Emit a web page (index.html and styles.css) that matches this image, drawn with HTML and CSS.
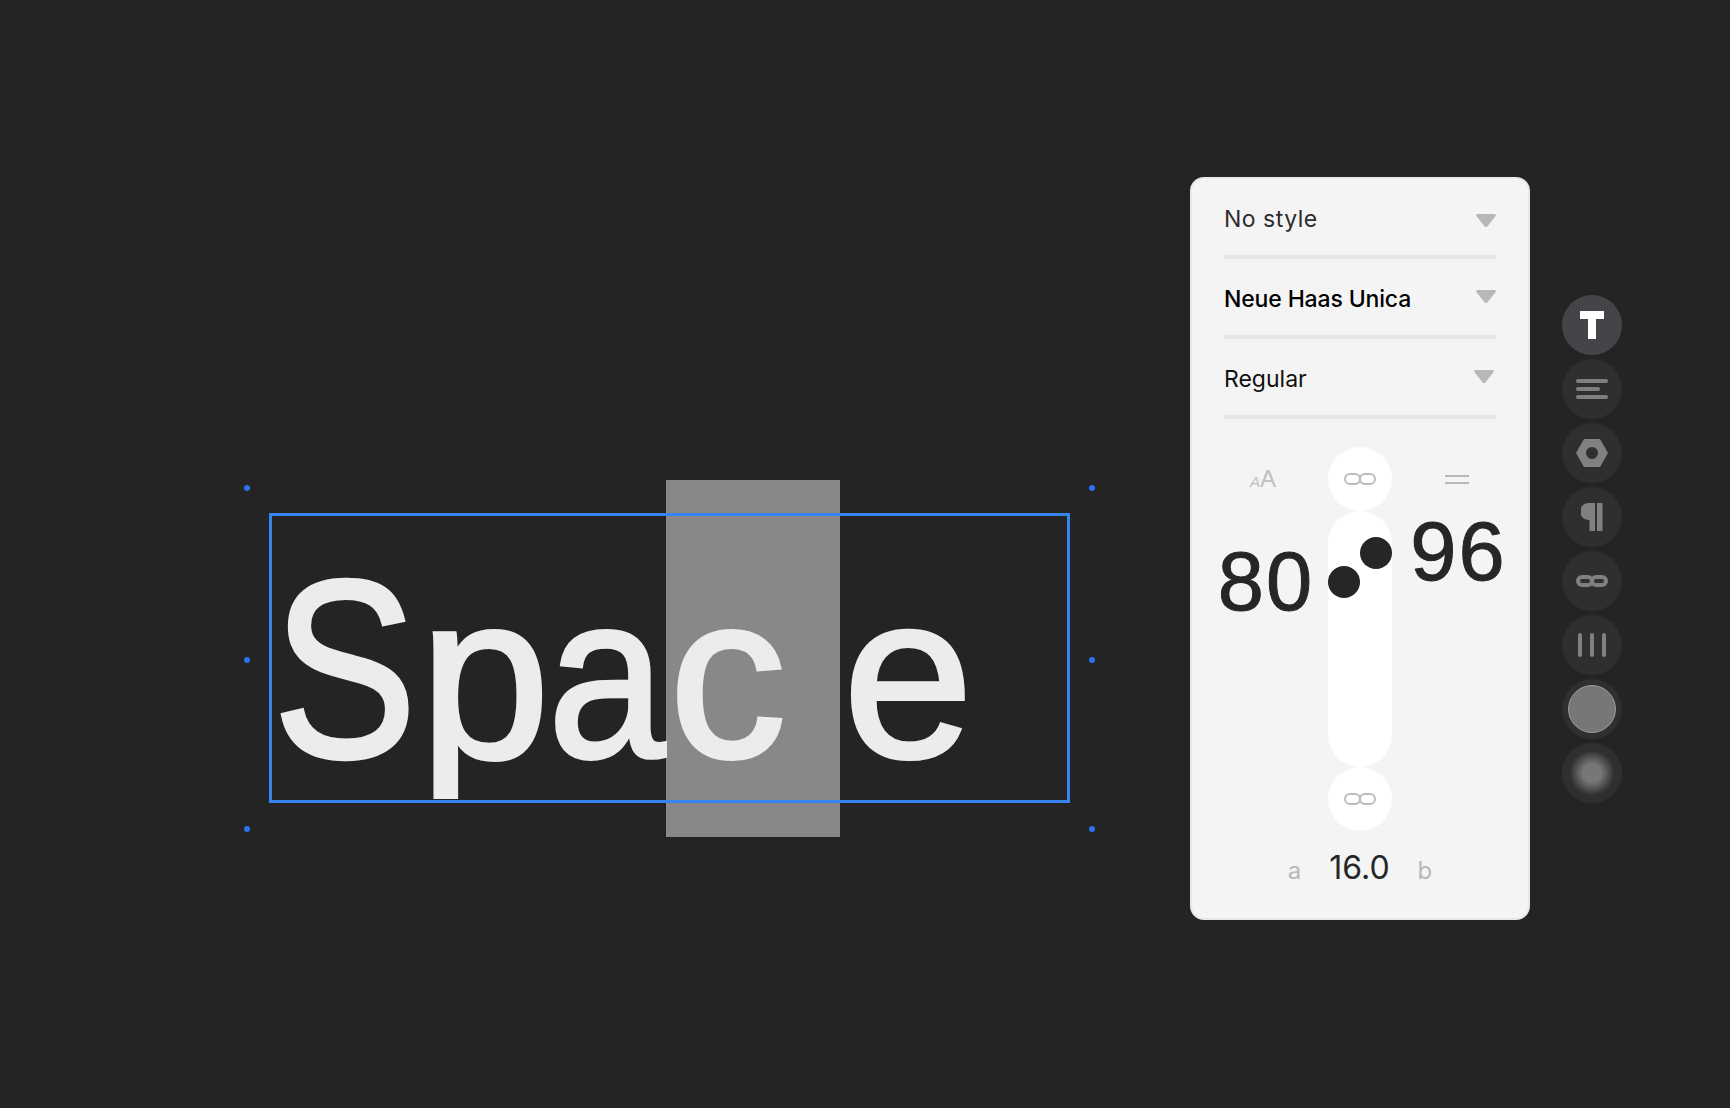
FILE: index.html
```html
<!DOCTYPE html>
<html lang="en">
<head>
	<meta charset="UTF-8">
	<title>Space</title>
	<link rel="stylesheet" href="styles.css">
</head>
<body>
	<div class="page">
		<div class="canvas">
			<div class="tracking-bar"></div>
			<div class="selection">
				<div class="word"><span class="glyph glyph-s">S</span><span class="glyph glyph-p">p</span><span class="glyph glyph-a">a</span><span class="glyph glyph-c">c</span><span class="glyph glyph-e">e</span></div>
			</div>
			<span class="handle handle-tl"></span>
			<span class="handle handle-tr"></span>
			<span class="handle handle-ml"></span>
			<span class="handle handle-mr"></span>
			<span class="handle handle-bl"></span>
			<span class="handle handle-br"></span>
		</div>

		<div class="panel">
			<div class="select">
				<span class="select-label select-muted">No style</span>
				<svg class="caret" width="20" height="13" viewBox="0 0 20 13"><path d="M1.500 0h17a1.300 1.300 0 0 1 1 2.200L11.500 12.300a2 2 0 0 1-3 0L.5 2.200A1.300 1.300 0 0 1 1.500 0z"/></svg>
			</div>
			<div class="select">
				<span class="select-label select-strong">Neue Haas Unica</span>
				<svg class="caret caret-up" width="20" height="13" viewBox="0 0 20 13"><path d="M1.500 0h17a1.300 1.300 0 0 1 1 2.200L11.500 12.300a2 2 0 0 1-3 0L.5 2.200A1.300 1.300 0 0 1 1.500 0z"/></svg>
			</div>
			<div class="select">
				<span class="select-label">Regular</span>
				<svg class="caret caret-up caret-left" width="20" height="13" viewBox="0 0 20 13"><path d="M1.500 0h17a1.300 1.300 0 0 1 1 2.200L11.500 12.300a2 2 0 0 1-3 0L.5 2.200A1.300 1.300 0 0 1 1.500 0z"/></svg>
			</div>

			<div class="metrics">
				<div class="metric metric-size">
					<div class="size-icon"><span class="size-small">A</span><span>A</span></div>
					<div class="metric-value">80</div>
				</div>
				<div class="slider">
					<div class="link-btn">
						<svg width="32" height="12" viewBox="0 0 32 12" fill="none" stroke="#bbb" stroke-width="2"><rect x="1" y="1" width="15" height="10" rx="5"/><rect x="16" y="1" width="15" height="10" rx="5"/></svg>
					</div>
					<div class="track">
						<span class="knob knob-left"></span>
						<span class="knob knob-right"></span>
					</div>
					<div class="link-btn">
						<svg width="32" height="12" viewBox="0 0 32 12" fill="none" stroke="#bbb" stroke-width="2"><rect x="1" y="1" width="15" height="10" rx="5"/><rect x="16" y="1" width="15" height="10" rx="5"/></svg>
					</div>
				</div>
				<div class="metric metric-leading">
					<svg class="leading-icon" width="24" height="9" viewBox="0 0 24 9" fill="#b8b8b8"><rect width="24" height="2"/><rect y="7" width="24" height="2"/></svg>
					<div class="metric-value">96</div>
				</div>
			</div>

			<div class="tracking">
				<span class="tracking-side">a</span>
				<span class="tracking-value">16.0</span>
				<span class="tracking-side">b</span>
			</div>
		</div>

		<div class="tools">
			<div class="tool tool-on">
				<svg width="24" height="28" viewBox="0 0 24 28" fill="#fff"><rect width="24" height="8"/><rect x="8" width="8" height="28"/></svg>
			</div>
			<div class="tool">
				<svg width="32" height="20" viewBox="0 0 32 20" fill="#808080"><rect width="32" height="4" rx="2"/><rect y="8" width="24" height="4" rx="2"/><rect y="16" width="32" height="4" rx="2"/></svg>
			</div>
			<div class="tool">
				<svg width="32" height="28" viewBox="0 0 32 28"><path fill="#808080" fill-rule="evenodd" d="M8 0h16l8 14-8 14H8L0 14zM16 8a6 6 0 1 0 0 12 6 6 0 0 0 0-12z"/></svg>
			</div>
			<div class="tool tool-para">
				<svg width="22" height="28" viewBox="0 0 22 28" fill="#808080"><path d="M14 0v28H8.500V17H7.500a8.500 8.500 0 0 1 0-17z"/><rect x="16" width="5.500" height="28"/></svg>
			</div>
			<div class="tool">
				<svg width="32" height="12" viewBox="0 0 32 12" fill="none" stroke="#808080" stroke-width="4"><rect x="2" y="2" width="14" height="8" rx="4"/><rect x="16" y="2" width="14" height="8" rx="4"/></svg>
			</div>
			<div class="tool">
				<svg width="28" height="24" viewBox="0 0 28 24" fill="#808080"><rect width="4" height="24" rx="2"/><rect x="12" width="4" height="24" rx="2"/><rect x="24" width="4" height="24" rx="2"/></svg>
			</div>
			<div class="tool"><span class="swatch"></span></div>
			<div class="tool"><span class="blur"></span></div>
		</div>
	</div>
</body>
</html>
```

FILE: styles.css
```css
* {
	box-sizing: border-box;
}
body {
	margin: 0;
	background: #242424;
	font-family: "Liberation Sans", Arial, sans-serif;
}
.page {
	display: flex;
	align-items: flex-start;
	height: 1108px;
	overflow: hidden;
}

/* canvas */
.canvas {
	position: relative;
	flex: none;
	width: 1190px;
	height: 1108px;
}
.tracking-bar {
	position: absolute;
	left: 666px;
	top: 480px;
	width: 174px;
	height: 357px;
	background: #888;
}
.selection {
	position: absolute;
	left: 269px;
	top: 513px;
	width: 801px;
	height: 290px;
	border: 3px solid #3584ee;
}
.word {
	margin: 40px 0 0 1px;
	font-size: 234px;
	line-height: 240px;
	color: #ececec;
	-webkit-text-stroke: 4px #ececec;
	white-space: nowrap;
}
.glyph {
	display: inline-block;
}
.glyph-s {
	transform: scale(.92, 1.08);
	transform-origin: 0 200px;
}
.glyph-p {
	margin-left: -9.4px;
	clip-path: inset(-30px -10px -3px -10px);
}
.glyph-a {
	margin-left: -1.6px;
	transform: scaleX(.9);
	transform-origin: left center;
}
.glyph-c {
	margin-left: -9.2px;
}
.glyph-e {
	margin-left: 56.7px;
}
.handle {
	position: absolute;
	width: 6px;
	height: 6px;
	border-radius: 50%;
	background: #2a72ee;
}
.handle-tl { left: 244px; top: 485px; }
.handle-tr { left: 1089px; top: 485px; }
.handle-ml { left: 244px; top: 657px; }
.handle-mr { left: 1089px; top: 657px; }
.handle-bl { left: 244px; top: 826px; }
.handle-br { left: 1089px; top: 826px; }

/* panel */
.panel {
	flex: none;
	width: 340px;
	height: 743px;
	margin-top: 177px;
	background: #f4f4f4;
	border: 2px solid #e8e8e8;
	border-radius: 14px;
}
.select {
	display: flex;
	align-items: center;
	justify-content: space-between;
	height: 80px;
	margin: 0 32px;
	padding-top: 4px;
	border-bottom: 4px solid #e6e6e6;
}
.select-label {
	font-family: Inter, "Liberation Sans", sans-serif;
	font-size: 23px;
	color: #111;
}
.select-muted {
	letter-spacing: .5px;
	color: #2c2c2c;
}
.select-strong {
	font-weight: 500;
	letter-spacing: -.15px;
	color: #000;
}
.caret {
	margin-top: 3px;
	fill: #b8b8b8;
}
.caret-up {
	margin-top: -5px;
}
.caret-left {
	margin-right: 2px;
}

.metrics {
	display: grid;
	grid-template-columns: 136px 64px 136px;
	margin-top: 28px;
}
.metric {
	display: flex;
	flex-direction: column;
	align-items: center;
}
.metric-value {
	font-size: 83px;
	line-height: 1;
	letter-spacing: 2px;
	color: #262626;
	-webkit-text-stroke: 1px #262626;
}
.metric-size {
	padding-left: 6px;
}
.metric-size .metric-value {
	margin: 45px 0 0 6px;
}
.metric-leading {
	padding-right: 6px;
}
.metric-leading .metric-value {
	margin: 26px 0 0 3px;
}
.size-icon {
	height: 32px;
	margin-top: 16px;
	font-size: 24px;
	line-height: 32px;
	color: #c0c0c0;
}
.size-small {
	font-size: 15px;
	font-style: italic;
}
.leading-icon {
	margin-top: 28px;
}
.slider {
	display: flex;
	flex-direction: column;
}
.link-btn {
	display: flex;
	align-items: center;
	justify-content: center;
	width: 64px;
	height: 64px;
	background: #fff;
	border-radius: 50%;
}
.track {
	position: relative;
	height: 256px;
	background: #fff;
	border-radius: 32px;
}
.knob {
	position: absolute;
	width: 32px;
	height: 32px;
	border-radius: 50%;
	background: #262626;
}
.knob-left {
	left: 0;
	top: 55px;
}
.knob-right {
	right: 0;
	top: 26px;
}
.tracking {
	display: flex;
	align-items: baseline;
	justify-content: center;
	gap: 28px;
	margin-top: 17px;
	font-family: Inter, "Liberation Sans", sans-serif;
}
.tracking-value {
	font-size: 32px;
	color: #262626;
}
.tracking-side {
	font-size: 24px;
	color: #b8b8b8;
}

/* tool column */
.tools {
	display: flex;
	flex: none;
	flex-direction: column;
	gap: 4px;
	margin: 295px 0 0 32px;
}
.tool {
	display: flex;
	align-items: center;
	justify-content: center;
	width: 60px;
	height: 60px;
	border-radius: 50%;
	background: #2f2f31;
}
.tool-on {
	background: #444449;
}
.tool-para {
	padding-right: 1px;
}
.swatch {
	width: 48px;
	height: 48px;
	border-radius: 50%;
	background: #777;
	border: 1px solid #999;
}
.blur {
	width: 60px;
	height: 60px;
	border-radius: 50%;
	background: radial-gradient(circle closest-side, #777 0, #777 30%, #2f2f31 75%);
}
```
